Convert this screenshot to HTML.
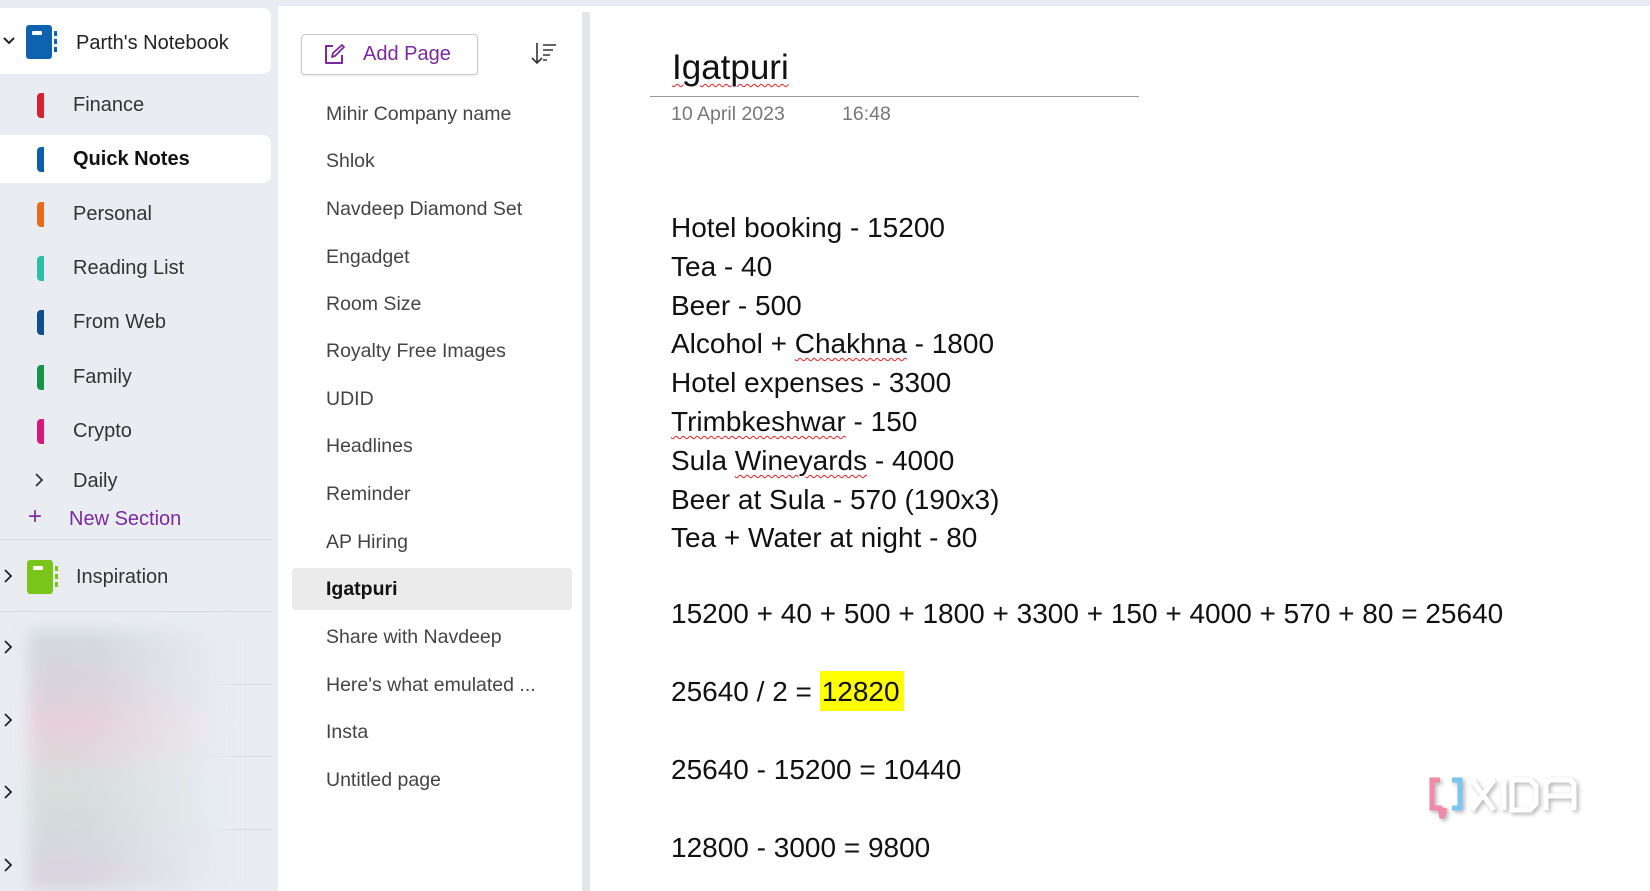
<!DOCTYPE html>
<html><head><meta charset="utf-8"><style>
*{margin:0;padding:0;box-sizing:border-box}
body{width:1650px;height:891px;overflow:hidden;background:#fff;font-family:"Liberation Sans",sans-serif;position:relative}
.abs{position:absolute}
#side{left:0;top:0;width:278px;height:891px;background:#e9edf2}
.top{left:0;top:0;width:1650px;height:6px;background:#e8ecf1}
.nbcard{left:0;top:8px;width:271px;height:66px;background:#fff;border-radius:0 8px 8px 0}
.sec{position:absolute;left:73px;font-size:20px;color:#333;line-height:24px}
.bar{position:absolute;left:37px;width:7px;height:25px;border-radius:4px 0 0 4px}
.sep{position:absolute;left:0;width:272px;height:1px;background:#d6dadf}
#list{left:279px;top:8px;width:303px;height:883px;background:#fff}
.pg{position:absolute;left:326px;font-size:19.5px;color:#444;line-height:24px}
.ln{position:absolute;left:671px;font-size:28px;color:#111;line-height:34px;white-space:nowrap}
.sq{text-decoration:underline wavy #d22;text-decoration-thickness:1px;text-underline-offset:4px}
</style></head><body>
<div class="abs top"></div>
<div id="side" class="abs"></div>
<div class="abs nbcard"></div>
<svg class="abs" style="left:2px;top:35px" width="14" height="12"><path d="M2 3l5 5 5-5" stroke="#222" stroke-width="2" fill="none"/></svg>
<svg class="abs" style="left:26px;top:25px" width="32" height="34"><rect x="0" y="0" width="26" height="34" rx="3" fill="#0f62ad"/><rect x="6" y="6" width="10" height="4" rx="1" fill="#fff"/><rect x="28" y="6" width="3" height="5" fill="#0f62ad"/><rect x="28" y="14" width="3" height="5" fill="#0f62ad"/><rect x="28" y="22" width="3" height="5" fill="#0f62ad"/></svg>
<div class="sec" style="left:76px;top:31px;font-size:20px;color:#222">Parth's Notebook</div>
<div class="abs" style="left:0;top:135px;width:271px;height:48px;background:#fff;border-radius:0 8px 8px 0"></div>
<div class="bar" style="top:93px;background:#d9202e"></div><div class="sec" style="top:93px">Finance</div>
<div class="bar" style="top:147px;background:#0f5ea8"></div><div class="sec" style="top:147px;font-weight:bold;color:#111">Quick Notes</div>
<div class="bar" style="top:202px;background:#ea6a1a"></div><div class="sec" style="top:202px">Personal</div>
<div class="bar" style="top:256px;background:#2bbfa8"></div><div class="sec" style="top:256px">Reading List</div>
<div class="bar" style="top:310px;background:#0f4f8e"></div><div class="sec" style="top:310px">From Web</div>
<div class="bar" style="top:365px;background:#16924a"></div><div class="sec" style="top:365px">Family</div>
<div class="bar" style="top:419px;background:#d6197a"></div><div class="sec" style="top:419px">Crypto</div>
<svg class="abs" style="left:34px;top:473px" width="10" height="14"><path d="M2 1l6 6-6 6" stroke="#333" stroke-width="1.8" fill="none"/></svg>
<div class="sec" style="top:469px">Daily</div>
<div class="sec" style="left:28px;top:505px;color:#7a2a9c;font-size:24px">+</div>
<div class="sec" style="left:69px;top:507px;color:#7a2a9c">New Section</div>
<div class="sep" style="top:539px"></div>
<svg class="abs" style="left:3px;top:569px" width="10" height="14"><path d="M2 1l6 6-6 6" stroke="#222" stroke-width="1.8" fill="none"/></svg>
<svg class="abs" style="left:27px;top:560px" width="32" height="34"><rect x="0" y="0" width="26" height="34" rx="3" fill="#7ac51a"/><rect x="6" y="6" width="10" height="4" rx="1" fill="#fff"/><rect x="28" y="6" width="3" height="5" fill="#7ac51a"/><rect x="28" y="14" width="3" height="5" fill="#7ac51a"/><rect x="28" y="22" width="3" height="5" fill="#7ac51a"/></svg>
<div class="sec" style="left:76px;top:565px">Inspiration</div>
<div class="sep" style="top:611px"></div>
<div class="sep" style="top:684px;left:210px;width:62px"></div>
<div class="sep" style="top:756px;left:210px;width:62px"></div>
<div class="sep" style="top:829px;left:210px;width:62px"></div>
<svg class="abs" style="left:3px;top:640px" width="10" height="14"><path d="M2 1l6 6-6 6" stroke="#222" stroke-width="1.8" fill="none"/></svg>
<svg class="abs" style="left:3px;top:713px" width="10" height="14"><path d="M2 1l6 6-6 6" stroke="#222" stroke-width="1.8" fill="none"/></svg>
<svg class="abs" style="left:3px;top:785px" width="10" height="14"><path d="M2 1l6 6-6 6" stroke="#222" stroke-width="1.8" fill="none"/></svg>
<svg class="abs" style="left:3px;top:858px" width="10" height="14"><path d="M2 1l6 6-6 6" stroke="#222" stroke-width="1.8" fill="none"/></svg>
<div class="abs" style="left:28px;top:630px;width:200px;height:261px;background:linear-gradient(90deg,rgba(233,237,242,0) 0%,rgba(233,237,242,0) 30%,#e9edf2 100%),linear-gradient(#cdd3dc,#d8cdd6 25%,#e8c9d4 35%,#d3dcd8 60%,#d0dad6 70%,#d5cfdc 90%);filter:blur(8px);opacity:.8"></div>
<div id="list" class="abs"></div>
<div class="abs" style="left:582px;top:12px;width:8px;height:879px;background:#e4e6e9"></div>
<div class="abs" style="left:301px;top:34px;width:177px;height:41px;border:1px solid #c9c9c9;border-radius:4px;background:#fff;box-shadow:0 1px 2px rgba(0,0,0,.1)"></div>
<svg class="abs" style="left:322px;top:43px" width="24" height="24"><path d="M11 3H4v17h16v-8" stroke="#7a2a9c" stroke-width="2" fill="none" stroke-linejoin="round"/><path d="M10 14l1-4 9-8 2 2-9 9z" stroke="#7a2a9c" stroke-width="1.8" fill="none" stroke-linejoin="round"/></svg>
<div class="abs" style="left:363px;top:43px;font-size:20px;color:#7a2a9c">Add Page</div>
<svg class="abs" style="left:531px;top:40px" width="28" height="28"><path d="M6 3v20M1 18l5 5 5-5" stroke="#333" stroke-width="1.6" fill="none"/><path d="M12 5h13M12 10h10M12 15h7M12 20h4" stroke="#333" stroke-width="1.6"/></svg>
<div class="abs" style="left:292px;top:568px;width:280px;height:42px;background:#ebebeb;border-radius:4px"></div>
<div class="pg" style="top:102px">Mihir Company name</div>
<div class="pg" style="top:149px">Shlok</div>
<div class="pg" style="top:197px">Navdeep Diamond Set</div>
<div class="pg" style="top:245px">Engadget</div>
<div class="pg" style="top:292px">Room Size</div>
<div class="pg" style="top:339px">Royalty Free Images</div>
<div class="pg" style="top:387px">UDID</div>
<div class="pg" style="top:434px">Headlines</div>
<div class="pg" style="top:482px">Reminder</div>
<div class="pg" style="top:530px">AP Hiring</div>
<div class="pg" style="top:577px;font-weight:bold;color:#111">Igatpuri</div>
<div class="pg" style="top:625px">Share with Navdeep</div>
<div class="pg" style="top:673px">Here's what emulated ...</div>
<div class="pg" style="top:720px">Insta</div>
<div class="pg" style="top:768px">Untitled page</div>
<div class="abs" style="left:672px;top:48px;font-size:35px;color:#111"><span class="sq">Igatpuri</span></div>
<div class="abs" style="left:650px;top:96px;width:489px;height:1px;background:#999"></div>
<div class="abs" style="left:671px;top:103px;font-size:19.5px;color:#777">10 April 2023</div>
<div class="abs" style="left:842px;top:103px;font-size:19.5px;color:#777">16:48</div>
<div class="ln" style="top:211px">Hotel booking - 15200</div>
<div class="ln" style="top:250px">Tea - 40</div>
<div class="ln" style="top:289px">Beer - 500</div>
<div class="ln" style="top:327px">Alcohol + <span class="sq">Chakhna</span> - 1800</div>
<div class="ln" style="top:366px">Hotel expenses - 3300</div>
<div class="ln" style="top:405px"><span class="sq">Trimbkeshwar</span> - 150</div>
<div class="ln" style="top:444px">Sula <span class="sq">Wineyards</span> - 4000</div>
<div class="ln" style="top:483px">Beer at Sula - 570 (190x3)</div>
<div class="ln" style="top:521px">Tea + Water at night - 80</div>
<div class="ln" style="top:597px">15200 + 40 + 500 + 1800 + 3300 + 150 + 4000 + 570 + 80 = 25640</div>
<div class="ln" style="top:675px">25640 / 2 = <span style="background:#ffff00;padding:5px 4px 4px 2px">12820</span></div>
<div class="ln" style="top:753px">25640 - 15200 = 10440</div>
<div class="ln" style="top:831px">12800 - 3000 = 9800</div>
<svg class="abs" style="left:1428px;top:776px;filter:drop-shadow(2px 2px 2px rgba(0,0,0,.3))" width="160" height="52"><path d="M12 4H4v28h8l2 10 3-10" stroke="#f08aa8" stroke-width="5" fill="none"/><path d="M24 4h8v28h-8" stroke="#7cc6f0" stroke-width="5" fill="none"/><path d="M44 4l22 30M66 4L44 34" stroke="#fff" stroke-width="5"/><path d="M76 4v30" stroke="#fff" stroke-width="5"/><path d="M84 4h18l6 6v18l-6 6H84z" stroke="#fff" stroke-width="5" fill="none"/><path d="M118 34V8l4-4h20l4 4v26M118 20h28" stroke="#fff" stroke-width="5" fill="none"/></svg>
</body></html>
